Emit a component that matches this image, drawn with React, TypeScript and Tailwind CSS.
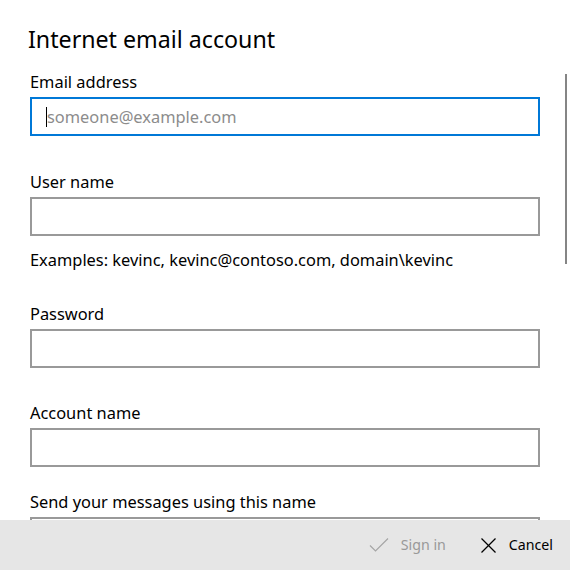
const FONT = { fontFamily: '"Noto Sans", "Open Sans", sans-serif' };

function Field({ label, focused, placeholder }: { label: string; focused?: boolean; placeholder?: string }) {
  return (
    <div>
      <p className="pt-[1px] text-[16.4px] leading-[20px] text-black">{label}</p>
      <div
        className={`mt-[5px] flex h-[39px] w-[510px] items-center border-2 pl-[14px] ${
          focused ? "border-[#0078d7]" : "border-[#999999]"
        }`}
      >
        {focused && <span className="h-[20px] w-px bg-black" />}
        {placeholder && (
          <span className="text-[16.4px] leading-[20px] text-[#8c8c8c]">{placeholder}</span>
        )}
      </div>
    </div>
  );
}

export default function App() {
  return (
    <div className="relative flex h-[570px] w-[570px] flex-col overflow-hidden bg-white" style={FONT}>
      <div className="flex-1 overflow-hidden pl-[30px]">
        <h1 className="-ml-[2px] mt-[23px] text-[23.2px] font-normal leading-[32px] text-black">
          Internet email account
        </h1>
        <div className="mt-[16px]">
          <Field label="Email address" focused placeholder="someone@example.com" />
        </div>
        <div className="mt-[35px]">
          <Field label="User name" />
        </div>
        <p className="mt-[14px] text-[16.4px] leading-[20px] text-black">
          Examples: kevinc, kevinc@contoso.com, domain\kevinc
        </p>
        <div className="mt-[33px]">
          <Field label="Password" />
        </div>
        <div className="mt-[34px]">
          <Field label="Account name" />
        </div>
        <div className="mt-[24px]">
          <Field label="Send your messages using this name" />
        </div>
      </div>

      {/* overlay scrollbar */}
      <div className="absolute left-[565px] top-[74px] h-[190px] w-[2px] bg-[#858585]" />

      <div className="flex h-[50px] shrink-0 items-center justify-end bg-[#e6e6e6] pr-[17px]">
        <button className="flex items-center gap-[12px] text-[14.2px] leading-[20px] text-[#999999]">
          <svg width="20" height="16" viewBox="0 0 20 16" fill="none" stroke="#a6a6a6" strokeWidth="1.2">
            <polyline points="1,8.5 6.5,14 19,1.5" />
          </svg>
          Sign in
        </button>
        <button className="ml-[35px] flex items-center gap-[13px] text-[14.2px] leading-[20px] text-black">
          <svg width="15" height="15" viewBox="0 0 15 15" fill="none" stroke="#000" strokeWidth="1.3">
            <line x1="0.5" y1="0.5" x2="14.5" y2="14.5" />
            <line x1="14.5" y1="0.5" x2="0.5" y2="14.5" />
          </svg>
          Cancel
        </button>
      </div>
    </div>
  );
}
